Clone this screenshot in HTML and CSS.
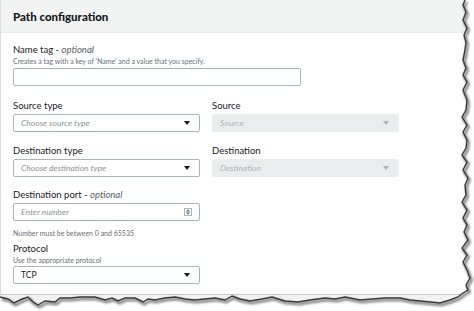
FILE: index.html
```html
<!DOCTYPE html>
<html>
<head>
	<title>Path configuration</title>
	<link rel="stylesheet" href="styles.css">
</head>
<body>
<div class="sheet">
	<div class="card">
		<div class="card-head"><h2>Path configuration</h2></div>
		<div class="card-body">
			<div class="field f-name">
				<div class="label">Name tag - <i>optional</i></div>
				<div class="desc">Creates a tag with a key of 'Name' and a value that you specify.</div>
				<div class="control wide"></div>
			</div>

			<div class="row f-source">
				<div class="field">
					<div class="label">Source type</div>
					<div class="control select"><span class="ph">Choose source type</span><span class="caret"></span></div>
				</div>
				<div class="field">
					<div class="label">Source</div>
					<div class="control select disabled"><span class="ph">Source</span><span class="caret"></span></div>
				</div>
			</div>

			<div class="row f-dest">
				<div class="field">
					<div class="label">Destination type</div>
					<div class="control select"><span class="ph">Choose destination type</span><span class="caret"></span></div>
				</div>
				<div class="field">
					<div class="label">Destination</div>
					<div class="control select disabled"><span class="ph">Destination</span><span class="caret"></span></div>
				</div>
			</div>

			<div class="field narrow f-port">
				<div class="label">Destination port - <i>optional</i></div>
				<div class="control number"><span class="ph">Enter number</span>
					<svg class="spin" width="8" height="8" viewBox="0 0 8 8"><rect x="0.5" y="0.5" width="7" height="7" fill="#fff" stroke="#aab7b8"/><path d="M2 3.4 L4 1.6 L6 3.4 Z M2 4.6 L4 6.4 L6 4.6 Z" fill="#545b64"/></svg>
				</div>
				<div class="hint">Number must be between 0 and 65535</div>
			</div>

			<div class="field narrow f-proto">
				<div class="label">Protocol</div>
				<div class="desc">Use the appropriate protocol</div>
				<div class="control select"><span class="val">TCP</span><span class="caret"></span></div>
			</div>
		</div>
	</div>
	<svg class="torn" width="474" height="311" viewBox="0 0 474 311">
		<defs>
			<filter id="blur" x="-10%" y="-10%" width="120%" height="120%"><feGaussianBlur stdDeviation="1"/></filter>
		</defs>
		<polygon fill="#fff" points="0,297 8,299 14,303 22,299 28,297 33,302 38,305 45,301 55,302 60,298 70,298 80,297 95,297 105,300 112,298 118,301 125,298 135,298 143,302 148,299 155,300 165,298 175,297 185,299 195,300 205,299 215,298 225,300 232,296 240,299 250,301 262,299 272,297 285,301 298,302 310,300 325,298 335,299 345,297 360,300 372,299 385,298 400,298 410,300 420,301 430,302 440,303 450,300 458,297 463,293 468,290 466,285 470,278 467,270 463,262 467,255 462,248 468,240 464,232 467,225 463,218 467,210 462,202 466,195 465,185 468,178 463,170 467,162 462,155 466,148 467,140 463,132 467,125 462,117 466,110 467,100 463,90 467,82 463,75 466,68 463,60 465,50 466,42 464,35 467,28 463,20 466,12 463,5 465,0 474,0 474,311 0,311"/>
		<polyline fill="none" stroke="#8a8a8a" stroke-width="3" filter="url(#blur)" transform="translate(1.5,2)" points="0,297 8,299 14,303 22,299 28,297 33,302 38,305 45,301 55,302 60,298 70,298 80,297 95,297 105,300 112,298 118,301 125,298 135,298 143,302 148,299 155,300 165,298 175,297 185,299 195,300 205,299 215,298 225,300 232,296 240,299 250,301 262,299 272,297 285,301 298,302 310,300 325,298 335,299 345,297 360,300 372,299 385,298 400,298 410,300 420,301 430,302 440,303 450,300 458,297 463,293 468,290 466,285 470,278 467,270 463,262 467,255 462,248 468,240 464,232 467,225 463,218 467,210 462,202 466,195 465,185 468,178 463,170 467,162 462,155 466,148 467,140 463,132 467,125 462,117 466,110 467,100 463,90 467,82 463,75 466,68 463,60 465,50 466,42 464,35 467,28 463,20 466,12 463,5 465,0"/>
		<polyline fill="none" stroke="#3a3a3a" stroke-width="1.4" points="0,297 8,299 14,303 22,299 28,297 33,302 38,305 45,301 55,302 60,298 70,298 80,297 95,297 105,300 112,298 118,301 125,298 135,298 143,302 148,299 155,300 165,298 175,297 185,299 195,300 205,299 215,298 225,300 232,296 240,299 250,301 262,299 272,297 285,301 298,302 310,300 325,298 335,299 345,297 360,300 372,299 385,298 400,298 410,300 420,301 430,302 440,303 450,300 458,297 463,293 468,290 466,285 470,278 467,270 463,262 467,255 462,248 468,240 464,232 467,225 463,218 467,210 462,202 466,195 465,185 468,178 463,170 467,162 462,155 466,148 467,140 463,132 467,125 462,117 466,110 467,100 463,90 467,82 463,75 466,68 463,60 465,50 466,42 464,35 467,28 463,20 466,12 463,5 465,0"/>
	</svg>
</div>
</body>
</html>
```
FILE: styles.css
```css
body {
	margin: 0;
	background: #fff;
	font-family: Lato, "Open Sans", sans-serif;
	color: #16191f;
}
.sheet {
	position: relative;
	width: 474px;
	height: 311px;
	overflow: hidden;
	background: #f2f2f2;
}
.card {
	background: #fff;
	height: 294px;
	border-left: 1px solid #dcdcdc;
	border-bottom: 1px solid #c8c8c8;
}
.card-head {
	height: 33px;
	background: #f2f3f3;
	border-bottom: 1px solid #eaeded;
	box-sizing: border-box;
	display: flex;
	align-items: center;
	padding-left: 12px;
}
.card-head h2 {
	margin: 0;
	font-size: 11.5px;
	font-weight: 900;
}
.card-body {
	padding: 0 12px;
}
.label {
	font-size: 9.5px;
	line-height: 12px;
	height: 12px;
}
.label i {
	color: #545b64;
}
.desc, .hint {
	font-size: 7px;
	line-height: 10px;
	height: 10px;
	color: #687078;
}
.control {
	box-sizing: border-box;
	height: 18px;
	border: 1px solid #aab7b8;
	border-radius: 2px;
	background: #fff;
	display: flex;
	align-items: center;
	padding: 0 7px;
	font-size: 8.5px;
	margin-top: 2px;
}
.control.wide {
	width: 288px;
}
.f-name {
	margin-top: 11px;
}
.row {
	display: grid;
	grid-template-columns: 187px 187px;
	column-gap: 12px;
}
.f-source {
	margin-top: 14px;
}
.f-dest {
	margin-top: 13px;
}
.narrow {
	width: 187px;
}
.f-port {
	margin-top: 12px;
}
.f-proto {
	margin-top: 5px;
}
.f-proto .control {
	margin-top: 1px;
}
.hint {
	margin-top: 7px;
}
.ph {
	color: #879596;
	font-style: italic;
	flex: 1;
}
.val {
	flex: 1;
	color: #16191f;
}
.caret {
	width: 0;
	height: 0;
	border-left: 3px solid transparent;
	border-right: 3px solid transparent;
	border-top: 4px solid #16191f;
	margin-right: 2px;
}
.disabled {
	background: #eaeded;
	border-color: #eaeded;
}
.disabled .ph {
	color: #aab7b8;
}
.disabled .caret {
	border-top-color: #aab7b8;
}
.torn {
	position: absolute;
	left: 0;
	top: 0;
}
```
